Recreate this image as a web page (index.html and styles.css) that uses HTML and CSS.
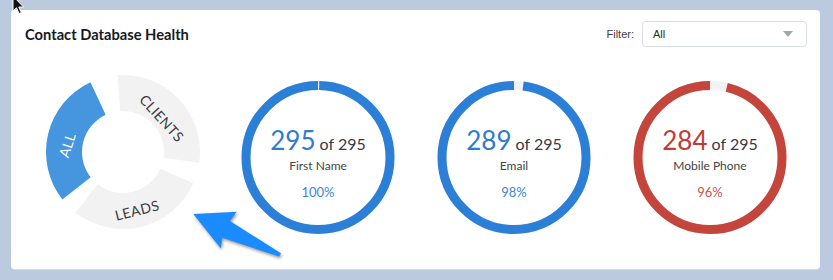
FILE: index.html
```html
<!DOCTYPE html>
<html>
<head>
<meta charset="utf-8">
<link rel="stylesheet" href="styles.css">
</head>
<body>
<div class="card">
  <div class="header">
    <div class="title">Contact Database Health</div>
    <div class="filter">
      <span class="filter-label">Filter:</span>
      <div class="select"><span>All</span><span class="caret"></span></div>
    </div>
  </div>
  <div class="content">
    <svg class="donut" width="209" height="170" viewBox="0 0 209 170">
      <path class="seg seg-active" d="M51.32 129.41 A77 77 0 0 1 79.46 12.21 L94.67 44.84 A41 41 0 0 0 79.69 107.24 Z"/>
      <path class="seg" d="M106.63 5.18 A77 77 0 0 1 188.25 92.72 L152.60 87.71 A41 41 0 0 0 109.14 41.10 Z"/>
      <path class="seg" d="M182.34 113.32 A77 77 0 0 1 64.59 142.68 L86.76 114.31 A41 41 0 0 0 149.45 98.67 Z"/>
      <text class="seg-label seg-label-active" x="56" y="75" transform="rotate(-72 56 75)">ALL</text>
      <text class="seg-label" x="151" y="48" transform="rotate(48 151 48)">CLIENTS</text>
      <text class="seg-label" x="126" y="140" transform="rotate(-14 126 140)">LEADS</text>
    </svg>

    <div class="gauge">
      <svg class="ring" width="196" height="170" viewBox="0 0 196 170">
        <circle class="track" cx="98" cy="87.5" r="72"/>
        <circle class="fill fill-blue" cx="98" cy="87.5" r="72" transform="rotate(-90 98 87.5)" stroke-dasharray="451.2 452.4" stroke-dashoffset="-1.2"/>
      </svg>
      <div class="gauge-text">
        <div class="count"><span class="num blue">295</span> <span class="of">of 295</span></div>
        <div class="label">First Name</div>
        <div class="pct blue-light">100%</div>
      </div>
    </div>

    <div class="gauge">
      <svg class="ring" width="196" height="170" viewBox="0 0 196 170">
        <circle class="track" cx="98" cy="87.5" r="72"/>
        <circle class="fill fill-blue" cx="98" cy="87.5" r="72" transform="rotate(-90 98 87.5)" stroke-dasharray="443.2 452.4" stroke-dashoffset="-9.2"/>
      </svg>
      <div class="gauge-text">
        <div class="count"><span class="num blue">289</span> <span class="of">of 295</span></div>
        <div class="label">Email</div>
        <div class="pct blue-light">98%</div>
      </div>
    </div>

    <div class="gauge">
      <svg class="ring" width="196" height="170" viewBox="0 0 196 170">
        <circle class="track" cx="98" cy="87.5" r="72"/>
        <circle class="fill fill-red" cx="98" cy="87.5" r="72" transform="rotate(-90 98 87.5)" stroke-dasharray="435.5 452.4" stroke-dashoffset="-16.9"/>
      </svg>
      <div class="gauge-text">
        <div class="count"><span class="num red">284</span> <span class="of">of 295</span></div>
        <div class="label">Mobile Phone</div>
        <div class="pct red-light">96%</div>
      </div>
    </div>
  </div>

  <svg class="pointer-arrow" width="110" height="65" viewBox="0 0 110 65">
    <polygon points="8.3,9 51.7,6.7 45,16 96,48.3 94,51.5 37.3,32.7 35.7,43.3"/>
  </svg>
</div>

<svg class="cursor" width="14" height="20" viewBox="0 0 14 20">
  <polygon points="1,0 1,15 4.5,11.8 7,17.5 9.3,16.5 6.8,11 11.5,11" />
</svg>
</body>
</html>
```

FILE: styles.css
```css
html, body {
  margin: 0;
  padding: 0;
}

body {
  width: 833px;
  height: 280px;
  box-sizing: border-box;
  padding: 10px 13px 11px 11px;
  background: #bccadf;
  font-family: Lato, "Noto Sans", sans-serif;
  overflow: hidden;
  position: relative;
}

.card {
  position: relative;
  height: 259px;
  background: #ffffff;
  border-radius: 4px;
  box-shadow: 0 1px 0 #d7dee9;
  display: flex;
  flex-direction: column;
}

.header {
  display: flex;
  align-items: center;
  justify-content: space-between;
  padding: 11px 13px 0 14px;
  height: 26px;
}

.title {
  font-weight: 700;
  font-size: 14.7px;
  color: #16191d;
}

.filter {
  display: flex;
  align-items: center;
  gap: 8px;
}

.filter-label {
  font-family: "Liberation Sans", Arial, sans-serif;
  font-size: 11px;
  color: #3e3e3e;
}

.select {
  box-sizing: border-box;
  width: 165px;
  height: 26px;
  border: 1px solid #dadee5;
  border-radius: 4px;
  display: flex;
  align-items: center;
  justify-content: space-between;
  padding: 0 13px 0 10px;
  font-family: "Liberation Sans", Arial, sans-serif;
  font-size: 11px;
  color: #2b2b2b;
}

.caret {
  width: 0;
  height: 0;
  border-left: 5px solid transparent;
  border-right: 5px solid transparent;
  border-top: 6px solid #a3a7ad;
}

.content {
  margin-top: 23px;
  height: 170px;
  display: flex;
}

.donut {
  flex: none;
  display: block;
}

.seg {
  fill: #f2f2f2;
}

.seg-active {
  fill: #4596df;
}

.seg-label {
  font-family: Lato, sans-serif;
  font-size: 14px;
  letter-spacing: 0.4px;
  fill: #3c3c3c;
  text-anchor: middle;
  dominant-baseline: central;
}

.seg-label-active {
  fill: #ffffff;
}

.gauge {
  flex: none;
  width: 196px;
  height: 170px;
  display: grid;
}

.ring,
.gauge-text {
  grid-area: 1 / 1;
}

.ring {
  display: block;
}

.track {
  fill: none;
  stroke: #f1f2f3;
  stroke-width: 9;
}

.fill {
  fill: none;
  stroke-width: 9;
}

.fill-blue {
  stroke: #2c7fd6;
}

.fill-red {
  stroke: #c4453c;
}

.gauge-text {
  display: flex;
  flex-direction: column;
  align-items: center;
  padding-top: 55px;
}

.count {
  line-height: 30px;
  height: 30px;
  white-space: nowrap;
}

.num {
  font-size: 26px;
}

.of {
  font-size: 16px;
  color: #3a3a3a;
}

.label {
  margin-top: 3px;
  font-size: 12px;
  line-height: 16px;
  color: #444444;
}

.pct {
  margin-top: 10px;
  font-size: 13px;
  line-height: 16px;
}

.blue { color: #2e7bcf; }
.blue-light { color: #3d86d3; }
.red { color: #c23b35; }
.red-light { color: #c9524c; }

.pointer-arrow {
  position: absolute;
  left: 174px;
  top: 195px;
  overflow: visible;
}

.pointer-arrow polygon {
  fill: #1b8cff;
  filter: drop-shadow(1.5px 2px 1.5px rgba(40, 40, 40, 0.45));
}

.cursor {
  position: absolute;
  left: 12px;
  top: -4px;
}

.cursor polygon {
  fill: #111111;
  stroke: #ffffff;
  stroke-width: 1;
}
```
